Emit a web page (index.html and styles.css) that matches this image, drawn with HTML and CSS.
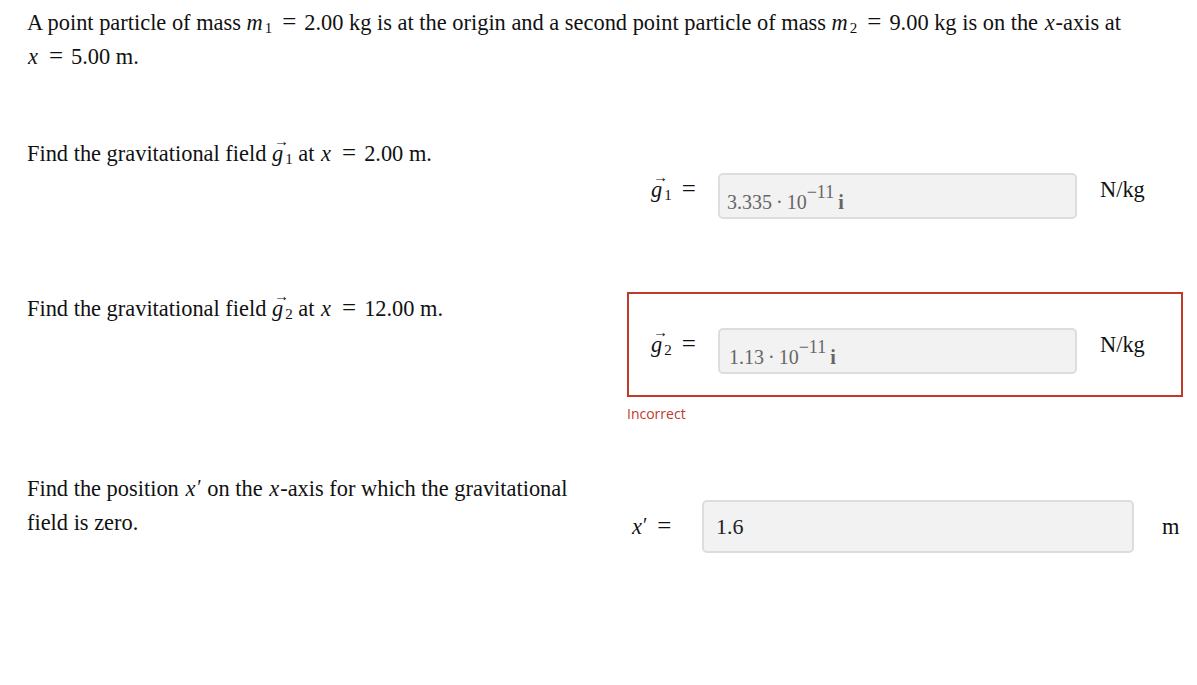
FILE: index.html
```html
<!DOCTYPE html>
<html>
<head>
<meta charset="utf-8">
<link rel="stylesheet" href="styles.css">
</head>
<body>
<div class="page">
  <p class="intro">A point particle of mass <span class="m"><i>m</i><span class="sub">1</span><span class="eq">=</span>2.00</span> kg is at the origin and a second point particle of mass <span class="m"><i>m</i><span class="sub">2</span><span class="eq">=</span>9.00</span> kg is on the <i class="mi">x</i>-axis at <span class="m"><i class="mi">x</i><span class="eq">=</span>5.00 m.</span></p>

  <div class="q q1">
    <div class="q-text">Find the gravitational field <span class="m"><span class="vec"><i>g</i></span><span class="sub">1</span></span> at <span class="m"><i class="mi">x</i><span class="eq">=</span>2.00 m.</span></div>
    <div class="ans-col">
      <div class="ans">
        <div class="row vrow">
          <div class="label"><span class="vec"><i>g</i></span><span class="sub">1</span><span class="eq">=</span></div>
          <div class="field"><span class="val">3.335<span class="dot">·</span>10<sup>−11</sup><b>i</b></span></div>
          <div class="unit">N/kg</div>
        </div>
      </div>
    </div>
  </div>

  <div class="q q2">
    <div class="q-text">Find the gravitational field <span class="m"><span class="vec"><i>g</i></span><span class="sub">2</span></span> at <span class="m"><i class="mi">x</i><span class="eq">=</span>12.00 m.</span></div>
    <div class="ans-col">
      <div class="ans wrong">
        <div class="row vrow">
          <div class="label"><span class="vec"><i>g</i></span><span class="sub">2</span><span class="eq">=</span></div>
          <div class="field"><span class="val v2">1.13<span class="dot">·</span>10<sup>−11</sup><b>i</b></span></div>
          <div class="unit">N/kg</div>
        </div>
      </div>
      <div class="msg">Incorrect</div>
    </div>
  </div>

  <div class="q q3">
    <div class="q-text">Find the position <span class="m"><i class="mi">x</i><span class="prime">′</span></span> on the <i class="mi">x</i>-axis for which the gravitational field is zero.</div>
    <div class="ans-col">
      <div class="ans ans3">
        <div class="row xrow">
          <div class="label"><i>x</i><span class="prime">′</span><span class="eq">=</span></div>
          <div class="field field3"><span class="val3">1.6</span></div>
          <div class="unit">m</div>
        </div>
      </div>
    </div>
  </div>
</div>
</body>
</html>
```

FILE: styles.css
```css
html, body {
  margin: 0;
  padding: 0;
  background: #ffffff;
}
body {
  font-family: "Liberation Serif", "Times New Roman", serif;
  font-size: 22.4px;
  color: #111111;
}
.page {
  padding: 6px 14px 0 27px;
}
.intro {
  margin: 0;
  line-height: 34px;
}
.m {
  white-space: nowrap;
}
.mi {
  margin: 0 1px;
}
.sub {
  font-size: 15px;
  vertical-align: -3px;
  line-height: 0;
  margin-left: 2px;
}
.eq {
  display: inline-block;
  font-size: 25px;
  line-height: 0;
  margin: 0 8px 0 10px;
}
.prime {
  font-size: 20px;
  vertical-align: 2px;
  line-height: 0;
  margin-left: 1px;
}
.vec {
  position: relative;
  display: inline-block;
}
.vec::before {
  content: "\2192";
  position: absolute;
  left: 2px;
  top: -13px;
  font-size: 15px;
  font-style: normal;
}
.q {
  display: flex;
  align-items: flex-start;
}
.q1 {
  margin-top: 63px;
}
.q2 {
  margin-top: 50px;
}
.q3 {
  margin-top: 49px;
}
.q-text {
  flex: 0 0 575px;
  line-height: 34px;
}
.ans-col {
  margin-left: 25px;
  width: 556px;
}
.ans {
  border: 2px solid transparent;
  padding: 34px 0 21px 22px;
}
.ans.wrong {
  border-color: #c0392b;
}
.ans3 {
  padding: 26px 0 0 3px;
}
.row {
  display: grid;
  align-items: start;
}
.vrow {
  grid-template-columns: 67px 359px 1fr;
}
.xrow {
  grid-template-columns: 70px 432px 1fr;
  align-items: center;
}
.label {
  line-height: 34px;
  white-space: nowrap;
}
.field {
  box-sizing: border-box;
  height: 46px;
  background: #f2f2f2;
  border: 2px solid #dddddd;
  border-radius: 5px;
  padding: 15px 8px 0 7px;
  line-height: 24px;
  color: #666666;
  white-space: nowrap;
  font-size: 20px;
}
.field3 {
  height: 53px;
  padding: 13px 12px 0 12px;
  color: #222222;
  font-size: 22px;
}
.val sup {
  font-size: 18px;
  line-height: 0;
  vertical-align: 11px;
  margin-right: 3px;
}
.val b {
  margin-left: 1px;
}
.v2 {
  margin-left: 2px;
}
.dot {
  margin: 0 4px;
}
.unit {
  padding-left: 23px;
  margin-top: 0;
  line-height: 34px;
}
.xrow .unit {
  padding-left: 28px;
  margin-top: 0;
}
.msg {
  font-family: "Open Sans", "Noto Sans", sans-serif;
  font-size: 14px;
  line-height: 18px;
  color: #c0392b;
  margin-top: 8px;
}
```
